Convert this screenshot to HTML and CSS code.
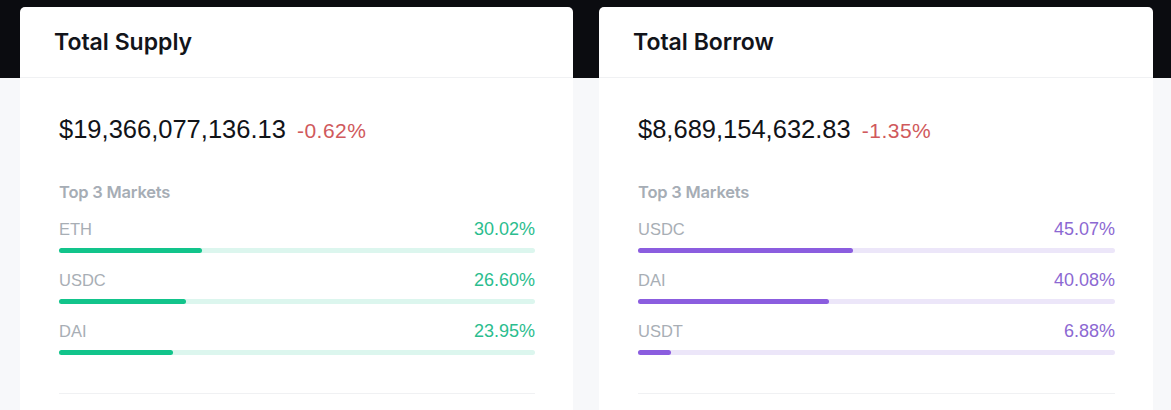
FILE: index.html
```html
<!DOCTYPE html>
<html lang="en">
<head>
    <meta charset="UTF-8">
    <meta name="viewport" content="width=device-width, initial-scale=1.0">
    <title>Markets</title>
    <link rel="stylesheet" href="styles.css">
</head>
<body>
    <div class="overview">
        <!-- supply card -->
        <div class="card supply">
            <div class="card-header">Total Supply</div>
            <div class="card-body">
                <div class="total">
                    <span class="amount">$19,366,077,136.13</span>
                    <span class="change">-0.62%</span>
                </div>
                <div class="markets-title">Top 3 Markets</div>
                <div class="market">
                    <div class="market-row"><span class="name">ETH</span><span class="pct">30.02%</span></div>
                    <div class="bar"><div class="fill" style="width: 30.02%"></div></div>
                </div>
                <div class="market">
                    <div class="market-row"><span class="name">USDC</span><span class="pct">26.60%</span></div>
                    <div class="bar"><div class="fill" style="width: 26.60%"></div></div>
                </div>
                <div class="market">
                    <div class="market-row"><span class="name">DAI</span><span class="pct">23.95%</span></div>
                    <div class="bar"><div class="fill" style="width: 23.95%"></div></div>
                </div>
                <div class="divider"></div>
            </div>
        </div>

        <!-- borrow card -->
        <div class="card borrow">
            <div class="card-header">Total Borrow</div>
            <div class="card-body">
                <div class="total">
                    <span class="amount">$8,689,154,632.83</span>
                    <span class="change">-1.35%</span>
                </div>
                <div class="markets-title">Top 3 Markets</div>
                <div class="market">
                    <div class="market-row"><span class="name">USDC</span><span class="pct">45.07%</span></div>
                    <div class="bar"><div class="fill" style="width: 45.07%"></div></div>
                </div>
                <div class="market">
                    <div class="market-row"><span class="name">DAI</span><span class="pct">40.08%</span></div>
                    <div class="bar"><div class="fill" style="width: 40.08%"></div></div>
                </div>
                <div class="market">
                    <div class="market-row"><span class="name">USDT</span><span class="pct">6.88%</span></div>
                    <div class="bar"><div class="fill" style="width: 6.88%"></div></div>
                </div>
                <div class="divider"></div>
            </div>
        </div>
    </div>
</body>
</html>
```

FILE: styles.css
```css
body {
    margin: 0;
    font-family: "Liberation Sans", Arial, sans-serif;
    /* dark top band, light page below */
    background: linear-gradient(to bottom, #0b0c10 0, #0b0c10 78px, #f7f8fa 78px);
    height: 410px;
    overflow: hidden;
}

.overview {
    display: grid;
    grid-template-columns: 553px 554px;
    gap: 26px;
    padding: 7px 0 0 20px;
    height: 100%;
    box-sizing: border-box;
}

.card {
    background: #fff;
    border-radius: 5px 5px 0 0;
}

.card-header {
    height: 71px;
    box-sizing: border-box;
    padding-left: 34px;
    display: flex;
    align-items: center;
    font-family: Inter, "Liberation Sans", sans-serif;
    font-size: 23px;
    font-weight: 600;
    letter-spacing: 0;
    color: #12141a;
    border-bottom: 1px solid #f0f1f3;
}

.card-body {
    padding: 36px 38px 0 39px;
}

.total {
    display: flex;
    align-items: baseline;
    gap: 11px;
    line-height: 30px;
}

.amount {
    font-size: 25.5px;
    color: #111318;
}

.change {
    font-size: 21px;
    color: #d0595c;
    letter-spacing: 0.5px;
}

.markets-title {
    margin-top: 36px;
    font-family: Inter, "Liberation Sans", sans-serif;
    font-size: 16.5px;
    font-weight: 600;
    line-height: 20px;
    color: #a6adb5;
    letter-spacing: -0.2px;
}

.market {
    margin-top: 17px;
}

.market-row {
    display: flex;
    justify-content: space-between;
    line-height: 20px;
}

.name {
    font-size: 16.5px;
    color: #a8aeb5;
}

.pct {
    font-size: 18px;
}

.bar {
    margin-top: 9px;
    height: 5px;
    border-radius: 3px;
}

.fill {
    height: 100%;
    border-radius: 3px;
}

.supply .pct { color: #2bbd8e; }
.supply .bar { background: #dcf6ee; }
.supply .fill { background: #12c48b; }

.borrow .pct { color: #8c68d2; }
.borrow .bar { background: #ece6f9; }
.borrow .fill { background: #8b5ddf; }

.divider {
    margin-top: 38px;
    height: 1px;
    background: #f0f1f3;
}
```
